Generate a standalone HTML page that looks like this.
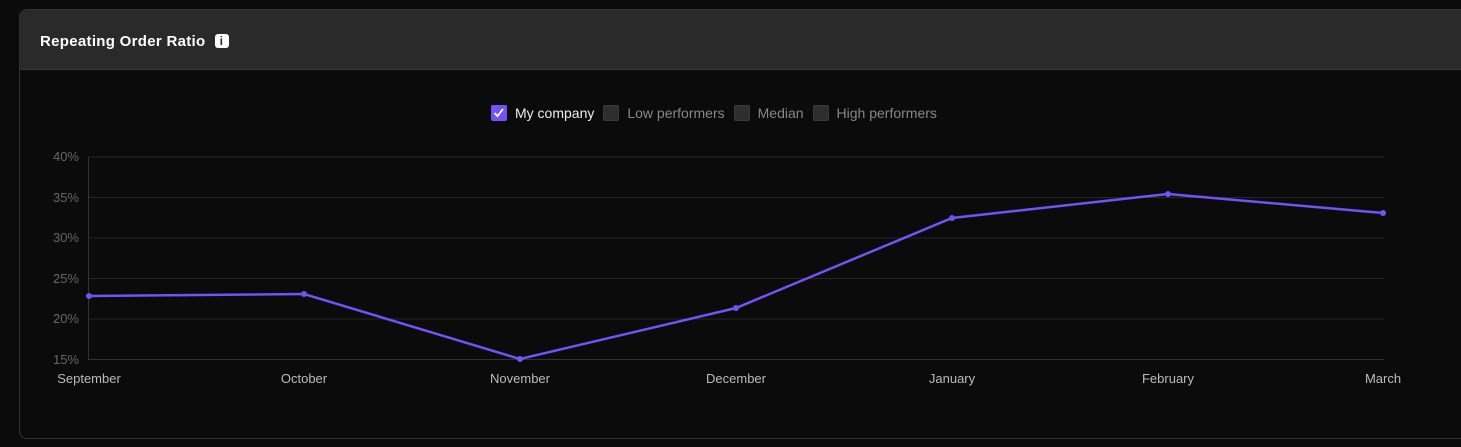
<!DOCTYPE html>
<html><head><style>
body{margin:0;background:#0b0b0b;width:1461px;height:447px;overflow:hidden;font-family:"Liberation Sans",sans-serif;}
.card{position:absolute;left:19px;top:9px;width:1460px;height:428px;border:1px solid #333;border-radius:8px;background:#0b0b0b;overflow:hidden}
.hdr{height:59px;background:#2a2a2a;border-bottom:1px solid #3a3a3a;position:relative}
.t{position:absolute;left:20px;top:23px;color:#fff;font-weight:bold;font-size:15px;letter-spacing:0.3px}
.i{display:inline-block;width:14px;height:14px;background:#fff;border-radius:3px;color:#2a2a2a;font-size:12px;text-align:center;line-height:14px;margin-left:9px;vertical-align:1px;font-weight:bold}
.leg{position:absolute;top:105px;left:491px;font-size:14px;color:#888;display:flex;align-items:center}
.cb{width:16px;height:16px;border-radius:2px;background:#2e2e2e;border:1px solid #3a3a3a;box-sizing:border-box;margin-right:8px;margin-left:9px}
</style></head><body>
<div class="card"><div class="hdr"><div class="t">Repeating Order Ratio<span class="i">i</span></div></div></div>
<div class="leg"><div class="cb" style="background:#7451f8;border-color:#7451f8;margin-left:0;position:relative"><svg width="16" height="16" style="position:absolute;left:-1px;top:-1px"><path d="M3.5 8l3 3 5.5-7" stroke="#fff" stroke-width="1.8" fill="none"/></svg></div><span style="color:#eee">My company</span><div class="cb"></div>Low performers<div class="cb"></div>Median<div class="cb"></div>High performers</div>
<svg width="1461" height="447" style="position:absolute;left:0;top:0" font-family="Liberation Sans" font-size="13">
<g stroke="#262626"><line x1="88" x2="1384" y1="157" y2="157"/><line x1="88" x2="1384" y1="197.5" y2="197.5"/><line x1="88" x2="1384" y1="238" y2="238"/><line x1="88" x2="1384" y1="278.5" y2="278.5"/><line x1="88" x2="1384" y1="319" y2="319"/><line x1="88" x2="1384" y1="359.5" y2="359.5" stroke="#333"/><line x1="88.5" x2="88.5" y1="157" y2="360" stroke="#333"/></g>
<g fill="#666" text-anchor="end"><text x="79" y="161">40%</text><text x="79" y="202">35%</text><text x="79" y="242">30%</text><text x="79" y="283">25%</text><text x="79" y="323">20%</text><text x="79" y="364">15%</text></g>
<g fill="#bbb" text-anchor="middle"><text x="89" y="383">September</text><text x="304" y="383">October</text><text x="520" y="383">November</text><text x="736" y="383">December</text><text x="952" y="383">January</text><text x="1168" y="383">February</text><text x="1383" y="383">March</text></g>
<polyline points="89,296 304,294 520,359 736,308 952,218 1168,194 1383,213" fill="none" stroke="#7451f8" stroke-width="2.5"/>
<g fill="#7451f8"><circle cx="89" cy="296" r="3"/><circle cx="304" cy="294" r="3"/><circle cx="520" cy="359" r="3"/><circle cx="736" cy="308" r="3"/><circle cx="952" cy="218" r="3"/><circle cx="1168" cy="194" r="3"/><circle cx="1383" cy="213" r="3"/></g>
</svg>
</body></html>
